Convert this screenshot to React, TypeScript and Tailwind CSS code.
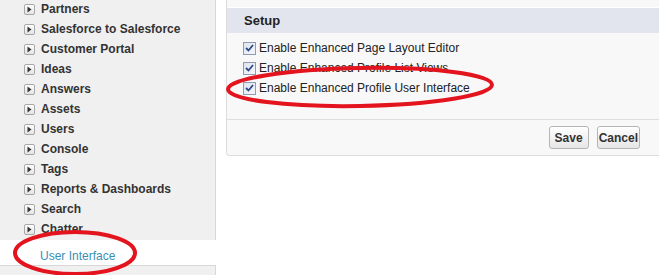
import React from 'react';

const items = [
  'Partners',
  'Salesforce to Salesforce',
  'Customer Portal',
  'Ideas',
  'Answers',
  'Assets',
  'Users',
  'Console',
  'Tags',
  'Reports & Dashboards',
  'Search',
  'Chatter',
];

const options = [
  'Enable Enhanced Page Layout Editor',
  'Enable Enhanced Profile List Views',
  'Enable Enhanced Profile User Interface',
];

function ExpandIcon() {
  return (
    <span className="flex h-[11px] w-[11px] shrink-0 items-center justify-center rounded-[2px] border border-[#a8a8a8] bg-gradient-to-b from-white to-[#e4e4e4]">
      <svg width="5" height="7" viewBox="0 0 5 7">
        <path d="M0.5 0.5 L4.5 3.5 L0.5 6.5 Z" fill="#333" />
      </svg>
    </span>
  );
}

function Checkbox() {
  return (
    <span className="flex h-[13px] w-[13px] shrink-0 items-center justify-center border border-[#8e9bb0] bg-gradient-to-br from-[#dfe4ee] to-[#f4f6fa]">
      <svg width="9" height="8" viewBox="0 0 9 8">
        <path d="M1 4 L3.5 6.5 L8 1" fill="none" stroke="#2a4a8c" strokeWidth="1.8" />
      </svg>
    </span>
  );
}

export default function App() {
  return (
    <div
      className="relative h-[275px] w-[659px] overflow-hidden bg-white text-[12px] text-[#222]"
      style={{ fontFamily: '"Liberation Sans", Arial, sans-serif' }}
    >
      <div className="flex">
        {/* Sidebar */}
        <div className="w-[216px] shrink-0">
          <div className="h-[241px] border-r border-[#d8d8d8] bg-[#f0f0f0]">
            <ul className="-mt-[1px]">
              {items.map((label) => (
                <li key={label} className="flex h-[20px] items-center gap-[6px] pl-[24px]">
                  <ExpandIcon />
                  <span className="font-bold text-[#333]">{label}</span>
                </li>
              ))}
            </ul>
          </div>
          <div className="flex h-[25px] w-[659px] items-center bg-white pl-[40px] pt-[6px] text-[#3b8fb3]">
            User Interface
          </div>
          <div className="h-[10px] border-r border-t border-[#d8d8d8] bg-[#f0f0f0]" />
        </div>

        {/* Main panel */}
        <div className="ml-[10px] flex-1">
          <div className="w-[460px] rounded-b-[4px] border-b border-l border-[#dcdcdc] bg-[#f8f8f8]">
            <div className="h-[8px] border-b border-white" />
            <div className="flex h-[25px] items-center bg-[#e2e5ee] pl-[17px] text-[13px] font-bold text-[#222]">
              Setup
            </div>
            <div className="flex flex-col pl-[16px] pt-[5px]">
              {options.map((o) => (
                <label key={o} className="flex h-[20px] items-center gap-[3px]">
                  <Checkbox />
                  <span className="text-[#222]">{o}</span>
                </label>
              ))}
            </div>
            <div className="mt-[21px] border-t border-[#dedede]" />
            <div className="flex h-[35px] items-center justify-end gap-[8px] pr-[46px]">
              <button className="h-[23px] rounded-[3px] border border-[#b5b5b5] bg-gradient-to-b from-white to-[#e6e6e6] px-[5px] font-bold text-[#333]">
                Save
              </button>
              <button className="h-[23px] rounded-[3px] border border-[#b5b5b5] bg-gradient-to-b from-white to-[#e6e6e6] px-[1px] font-bold text-[#333]">
                Cancel
              </button>
            </div>
          </div>
        </div>
      </div>

      {/* Hand drawn red annotations */}
      <svg className="pointer-events-none absolute left-0 top-0" width="659" height="275">
        <ellipse cx="75" cy="253" rx="60" ry="21" fill="none" stroke="#e3141d" strokeWidth="4" />
        <ellipse
          cx="360"
          cy="87"
          rx="132"
          ry="19"
          fill="none"
          stroke="#e3141d"
          strokeWidth="4"
          transform="rotate(-1 360 87)"
        />
      </svg>
    </div>
  );
}
